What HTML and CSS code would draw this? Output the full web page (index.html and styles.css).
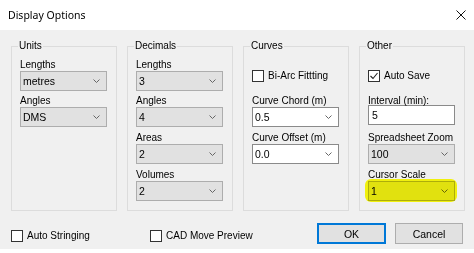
FILE: index.html
```html
<!DOCTYPE html>
<html>
<head>
<meta charset="utf-8">
<link rel="stylesheet" href="styles.css">
</head>
<body>
<div class="dialog">
  <div class="titlebar">
    <span class="title">Display Options</span>
    <svg class="close" width="10" height="10" viewBox="0 0 10 10"><path d="M0.5 0.5 L9.5 9.5 M9.5 0.5 L0.5 9.5" stroke="#111" stroke-width="1" fill="none"/></svg>
  </div>
  <div class="main">
    <div class="groups">
      <fieldset class="group">
        <legend>Units</legend>
        <div class="label">Lengths</div>
        <div class="combo"><span>metres</span><svg class="chev" width="7" height="4" viewBox="0 0 7 4"><polyline points="0.5,0.5 3.5,3.5 6.5,0.5" fill="none" stroke="#666" stroke-width="1"/></svg></div>
        <div class="label">Angles</div>
        <div class="combo"><span>DMS</span><svg class="chev" width="7" height="4" viewBox="0 0 7 4"><polyline points="0.5,0.5 3.5,3.5 6.5,0.5" fill="none" stroke="#666" stroke-width="1"/></svg></div>
      </fieldset>
      <fieldset class="group">
        <legend>Decimals</legend>
        <div class="label">Lengths</div>
        <div class="combo"><span>3</span><svg class="chev" width="7" height="4" viewBox="0 0 7 4"><polyline points="0.5,0.5 3.5,3.5 6.5,0.5" fill="none" stroke="#666" stroke-width="1"/></svg></div>
        <div class="label">Angles</div>
        <div class="combo"><span>4</span><svg class="chev" width="7" height="4" viewBox="0 0 7 4"><polyline points="0.5,0.5 3.5,3.5 6.5,0.5" fill="none" stroke="#666" stroke-width="1"/></svg></div>
        <div class="label">Areas</div>
        <div class="combo"><span>2</span><svg class="chev" width="7" height="4" viewBox="0 0 7 4"><polyline points="0.5,0.5 3.5,3.5 6.5,0.5" fill="none" stroke="#666" stroke-width="1"/></svg></div>
        <div class="label">Volumes</div>
        <div class="combo"><span>2</span><svg class="chev" width="7" height="4" viewBox="0 0 7 4"><polyline points="0.5,0.5 3.5,3.5 6.5,0.5" fill="none" stroke="#666" stroke-width="1"/></svg></div>
      </fieldset>
      <fieldset class="group">
        <legend>Curves</legend>
        <div class="label"></div>
        <div class="check-row"><span class="box"></span><span>Bi-Arc Fittting</span></div>
        <div class="label">Curve Chord (m)</div>
        <div class="combo edit"><span>0.5</span><svg class="chev" width="7" height="4" viewBox="0 0 7 4"><polyline points="0.5,0.5 3.5,3.5 6.5,0.5" fill="none" stroke="#666" stroke-width="1"/></svg></div>
        <div class="label">Curve Offset (m)</div>
        <div class="combo edit"><span>0.0</span><svg class="chev" width="7" height="4" viewBox="0 0 7 4"><polyline points="0.5,0.5 3.5,3.5 6.5,0.5" fill="none" stroke="#666" stroke-width="1"/></svg></div>
      </fieldset>
      <fieldset class="group">
        <legend>Other</legend>
        <div class="label"></div>
        <div class="check-row"><span class="box"><svg width="10" height="10" viewBox="0 0 10 10"><polyline points="1.5,5 4,7.5 8.5,2" fill="none" stroke="#222" stroke-width="1.1"/></svg></span><span>Auto Save</span></div>
        <div class="label">Interval (min):</div>
        <div class="textbox"><span>5</span></div>
        <div class="label">Spreadsheet Zoom</div>
        <div class="combo"><span>100</span><svg class="chev" width="7" height="4" viewBox="0 0 7 4"><polyline points="0.5,0.5 3.5,3.5 6.5,0.5" fill="none" stroke="#666" stroke-width="1"/></svg></div>
        <div class="label">Cursor Scale</div>
        <div class="combo highlighted"><span>1</span><svg class="chev" width="7" height="4" viewBox="0 0 7 4"><polyline points="0.5,0.5 3.5,3.5 6.5,0.5" fill="none" stroke="#666" stroke-width="1"/></svg></div>
      </fieldset>
    </div>
    <div class="footer">
      <div class="check-row first"><span class="box"></span><span>Auto Stringing</span></div>
      <div class="check-row second"><span class="box"></span><span>CAD Move Preview</span></div>
      <div class="btn default">OK</div>
      <div class="btn cancel">Cancel</div>
    </div>
  </div>
</div>
</body>
</html>
```

FILE: styles.css
```css
* { box-sizing: border-box; }
html, body { margin: 0; background: #ffffff; }
body {
  font-family: "Liberation Sans", Arial, sans-serif;
  font-size: 10px;
  color: #000;
}
.dialog { width: 474px; height: 253px; }
.titlebar {
  height: 30px;
  background: #fff;
  display: flex;
  align-items: center;
  justify-content: space-between;
  padding: 0 8px 0 8px;
}
.title {
  font-family: "Noto Sans", "Open Sans", sans-serif;
  font-size: 10.5px;
  color: #000;
}
.close { display: block; }
.main {
  background: #f0f0f0;
  height: 219px;
  padding: 9px 9px 0 11px;
}
.groups {
  display: flex;
  gap: 10px;
  height: 172px;
}
.group {
  margin: 0;
  width: 106px;
  min-width: 0;
  border: 1px solid #dcdcdc;
  padding: 1px 9px 0 8px;
}
.group legend {
  padding: 0 1px;
  margin-left: -2px;
  line-height: 14px;
  height: 14px;
}
.label {
  height: 16.67px;
  padding-top: 4.67px;
  line-height: 12px;
  white-space: nowrap;
}
.combo, .textbox {
  height: 20px;
  border: 1px solid #adadad;
  background: #e1e1e1;
  display: flex;
  align-items: center;
  justify-content: space-between;
  padding: 0 6px 0 2px;
  font-size: 10.5px;
}
.combo.edit {
  background: #fff;
  border-color: #8a8a8a;
}
.textbox {
  background: #fff;
  border-color: #8a8a8a;
  margin-top: -2px;
  margin-bottom: 2px;
  padding-left: 3px;
}
.chev { display: block; }
.highlighted { position: relative; }
.highlighted::after {
  content: "";
  position: absolute;
  top: -3px;
  left: -4px;
  right: -3px;
  bottom: -2px;
  background: #ffff10;
  mix-blend-mode: multiply;
  border-radius: 6px;
}
.check-row {
  height: 20px;
  display: flex;
  align-items: flex-start;
  gap: 4px;
  margin-top: -1px;
  margin-bottom: 1px;
  white-space: nowrap;
}
.check-row span:last-child { line-height: 12px; }
.box {
  width: 12px;
  height: 12px;
  border: 1px solid #333;
  background: #fff;
  display: flex;
  align-items: center;
  justify-content: center;
  flex: none;
}
.footer {
  display: flex;
  align-items: center;
  height: 21px;
  margin-top: 12px;
  padding-right: 2px;
}
.footer .check-row {
  height: auto;
  margin: 5px 0 0 0;
  align-items: center;
}
.footer .first { width: 139px; }
.footer .second { flex: 1; }
.btn {
  height: 21px;
  width: 69px;
  background: #e1e1e1;
  border: 1px solid #adadad;
  display: flex;
  align-items: center;
  justify-content: center;
  font-size: 10.5px;
}
.btn.default { border: 2px solid #0078d7; }
.btn.cancel { width: 68px; margin-left: 9px; }
```
